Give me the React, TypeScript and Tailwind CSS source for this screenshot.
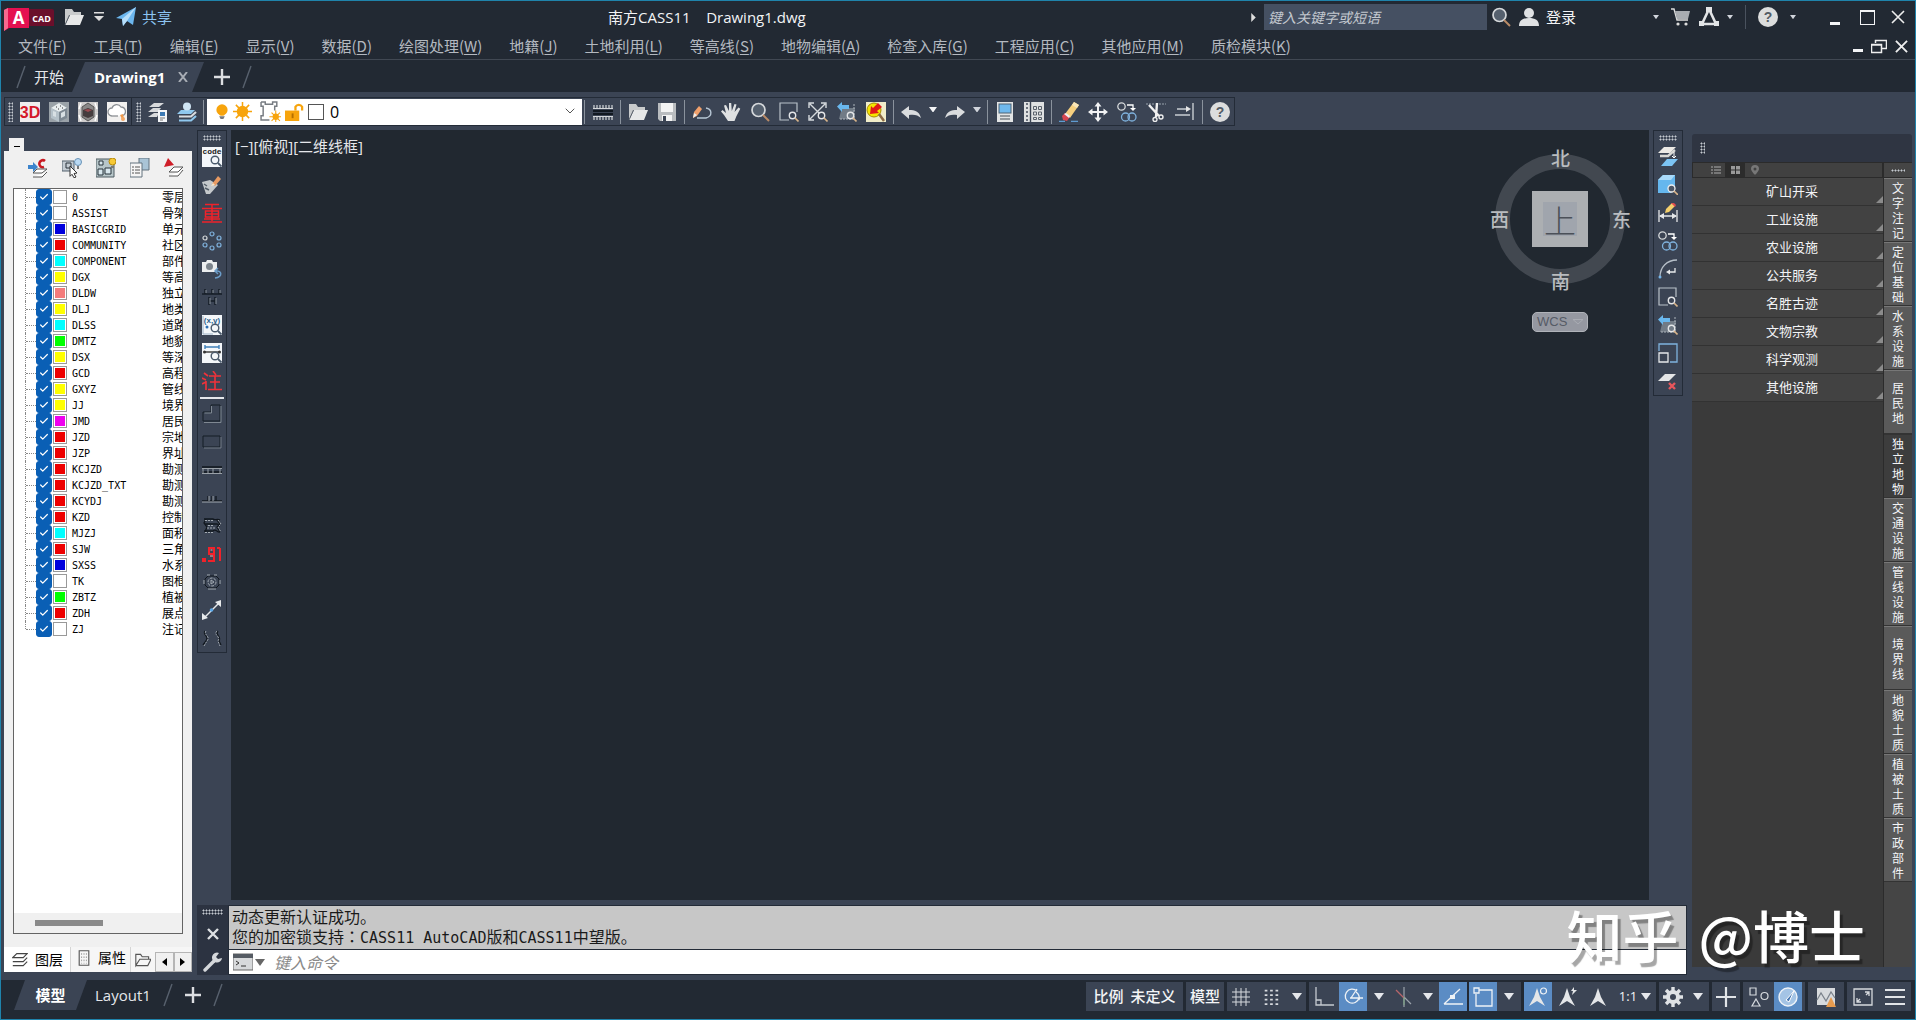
import { useState } from "react";
import type { ReactNode } from "react";
import clsx from "clsx";
import { Check, ChevronDown } from "lucide-react";

interface ToolItem {
  name: string;
  icon: ReactNode;
}

interface Layer {
  name: string;
  note: string;
  color: string;
}

function Icon({ children, className = "size-5" }: { children: ReactNode; className?: string }) {
  return (
    <svg viewBox="0 0 20 20" className={clsx("shrink-0", className)} fill="none" aria-hidden="true">
      {children}
    </svg>
  );
}

function Caret({ className = "w-[10px] text-gray-200" }: { className?: string }) {
  return (
    <svg viewBox="0 0 10 7" className={clsx("shrink-0", className)} aria-hidden="true">
      <path d="M0 0h10L5 7z" fill="currentColor" />
    </svg>
  );
}

// Small magnifier shared by several zoom tools
const lens = (
  <>
    <circle cx="13.5" cy="13.5" r="3.2" stroke="#e4e6e8" strokeWidth="1.4" />
    <path d="M16 16l3.5 3.5" stroke="#d9b48a" strokeWidth="1.6" />
  </>
);

const darkLens = (
  <>
    <circle cx="13" cy="13" r="3.8" fill="#f4f7fa" stroke="#4a5a6c" strokeWidth="1.4" />
    <path d="M16 16l3.5 3.5" stroke="#4a5a6c" strokeWidth="1.8" />
  </>
);

const icons = {
  threeD: (
    <Icon>
      <rect width="20" height="20" fill="#f0eeee" />
      <text x="10" y="16" textAnchor="middle" fontSize="16" fontWeight="700" fill="#d4182a" fontFamily="Liberation Sans">3D</text>
    </Icon>
  ),
  cube: (
    <Icon>
      <rect width="20" height="20" fill="#9aa2a8" />
      <path d="M2 6l8-5 8 5-8 4z" fill="#e9eef0" />
      <path d="M2 6l8 4v10l-8-4z" fill="#b5c1c9" />
      <path d="M18 6l-8 4v10l8-4z" fill="#7d8993" />
      <path d="M4 9l3 1v5l-3-1zM12 11l4-2v5l-4 2z" fill="#d8e0e4" />
      <path d="M7 5h1m3-1h1m-3 3h1m3-1h1" stroke="#333" />
    </Icon>
  ),
  orbit: (
    <Icon>
      <rect width="20" height="20" fill="#cfcdcd" />
      <path d="M4 5l6-4 6 4v10l-6 4-6-4z" fill="#8a8888" stroke="#555" />
      <path d="M5 8l5-2 5 2v6l-5 2-5-2z" fill="#453c3e" />
      <path d="M6 8l4 2 4-2-4-1z" fill="#9b4a50" />
      <path d="M3 1L1 7m16-6l2 6M3 19l-2-6m16 6l2-6" stroke="#fff" strokeWidth="1.4" />
    </Icon>
  ),
  cloud: (
    <Icon>
      <rect width="20" height="20" fill="#f1f0ef" />
      <path d="M5 14a4 4 0 010-8 5 5 0 019-1 4.500 4.500 0 012 8.500" stroke="#8b8f94" strokeWidth="1.3" fill="#fff" />
      <path d="M5 14h6" stroke="#8b8f94" strokeWidth="1.3" />
      <path d="M13 13l2 4 2 0-1-5z" fill="#ef9a4b" />
      <circle cx="16" cy="17" r="2" fill="#f2a765" />
    </Icon>
  ),
  layerProps: (
    <Icon>
      <path d="M6 1h10l-5 4H1zM5 6h8l-3 4H0zM6 11h5l-2 4H0z" fill="#d8dadc" />
      <rect x="10" y="8" width="9" height="12" fill="#f4f6f8" />
      <rect x="12" y="10" width="5" height="4" fill="#3d7ab4" />
      <path d="M12 16h5m-5 2h3" stroke="#777" />
    </Icon>
  ),
  layerCurrent: (
    <Icon>
      <path d="M4 8h14l-4 4H0z" fill="#8fc8ee" />
      <circle cx="10" cy="4.500" r="4" fill="#cfe4f3" />
      <path d="M19 10l-5 4.500H2" stroke="#d9dcdf" strokeWidth="2.200" />
      <path d="M19 14l-5 4.500H2" stroke="#8fc8ee" strokeWidth="2.200" />
    </Icon>
  ),
  hatch: (
    <Icon>
      <path d="M0 9h20M0 12h20" stroke="#111820" strokeWidth="2" />
      <path d="M1 3v3M4 3v3M7 3v3M10 3v3M13 3v3M16 3v3M19 3v3M1 15v3M4 15v3M7 15v3M10 15v3M13 15v3M16 15v3M19 15v3" stroke="#d3d6d9" strokeWidth="1.2" />
      <path d="M0 6.500h20M0 14.500h20" stroke="#d3d6d9" />
    </Icon>
  ),
  folder: (
    <Icon>
      <path d="M1 18V2h7l2 3h7v3H6z" fill="#c9cbcc" />
      <path d="M6 8h14l-4 10H1z" fill="#e7e8e8" />
      <path d="M1 18L5.500 8" stroke="#565e68" />
    </Icon>
  ),
  save: (
    <Icon>
      <path d="M1 1h18v18H3l-2-2z" fill="#b9bcbf" />
      <rect x="4" y="1" width="12" height="9" fill="#f3f3f3" />
      <rect x="5" y="13" width="10" height="6" fill="#f3f3f3" />
      <rect x="6" y="14" width="3" height="5" fill="#3b4453" />
    </Icon>
  ),
  pencil: (
    <Icon>
      <path d="M1 16l1-6 5-6 3 3-5 7z" fill="#f0a06c" />
      <path d="M1 16l1-5 3 2z" fill="#eee" />
      <path d="M5 16h9c7-2 6-9 0-10" stroke="#b7c6d4" strokeWidth="1.400" />
    </Icon>
  ),
  hand: (
    <Icon>
      <path d="M7 19l-4-6-3-3.500 1.500-1.500L5 11 3 3.500 5 3l3 6V1h2.200l.6 8L13.500 2l2 .6L13.500 10l4-4.500 1.800 1.300L15.500 14 13.500 19z" fill="#dfe1e2" />
    </Icon>
  ),
  zoom: (
    <Icon>
      <circle cx="8.500" cy="8" r="6.500" fill="#55606e" stroke="#d5d8db" strokeWidth="1.700" />
      <path d="M13 13l6 6" stroke="#b98b67" strokeWidth="2" />
    </Icon>
  ),
  zoomWindow: (
    <Icon>
      <path d="M10 18H1V1h17v9" stroke="#b9c1c9" strokeWidth="1.200" />
      {lens}
    </Icon>
  ),
  zoomExtents: (
    <Icon>
      <path d="M2 2l9 9M17 2L2 17M1 6V1h5M13 1h5v5M1 13v5h5" stroke="#d5d9dd" strokeWidth="1.400" />
      {lens}
    </Icon>
  ),
  zoomPrev: (
    <Icon>
      <path d="M3 6h15v3H4zM4 9h13l1 8H2z" fill="#717b86" />
      <path d="M17 2v15H3" stroke="#aeb5bc" strokeDasharray="2 1" />
      <path d="M0 4.500L5 0v3h7v4H5v3z" fill="#69b7ed" />
      {lens}
    </Icon>
  ),
  redraw: (
    <Icon>
      <rect width="20" height="20" fill="#f1edc9" />
      <circle cx="8" cy="8" r="7" fill="#f5e400" stroke="#a78c00" />
      <path d="M4 12l1-8 2 2 5-5 4 4-5 4 2 2z" fill="#e11818" />
      <path d="M13 12l5 7" stroke="#8d6b45" strokeWidth="2.500" />
    </Icon>
  ),
  undo: (
    <Icon>
      <path d="M0 10l8-6v4c6 0 10 1 12 8-3-3-7-4-12-3v4z" fill="#dadcde" />
    </Icon>
  ),
  redo: (
    <Icon>
      <path d="M20 10l-8-6v4c-6 0-10 1-12 8 3-3 7-4 12-3v4z" fill="#dadcde" />
    </Icon>
  ),
  properties: (
    <Icon>
      <rect x="2" y="0" width="16" height="20" fill="#e2e4e5" />
      <rect x="4" y="2" width="12" height="9" fill="#6fb9ee" stroke="#4e6275" />
      <path d="M5 14h10M5 17h10" stroke="#7a7f84" strokeWidth="1.400" />
    </Icon>
  ),
  design: (
    <Icon>
      <path d="M0 0h20v20H0z" fill="#dfe1e2" />
      <path d="M6.500 0v20" stroke="#3b4453" strokeWidth="1.400" />
      <path d="M3 1v18" stroke="#3b4453" strokeWidth="1.400" strokeDasharray="2 2" />
      <path d="M9.500 4.500h3v3h-3zm5 0h3v3h-3zm-5 5.500h3v3h-3zm5 0h3v3h-3zm-5 5.500h3v2h-3zm5 0h3v2h-3z" stroke="#5a626c" />
    </Icon>
  ),
  brush: (
    <Icon>
      <path d="M6 12L15 0l5 3-9 13z" fill="#f5cf7e" />
      <path d="M15 0l5 3-2 3-5-3z" fill="#f7e5b9" />
      <path d="M3 14l3-3 5 4-3 4-4-1z" fill="#d84650" />
      <path d="M5 12l2-1 4 3-1 2z" fill="#f1f1f1" />
      <path d="M0 19.300h6m6 0h7" stroke="#5f9bd0" strokeWidth="1.300" />
    </Icon>
  ),
  move: (
    <Icon>
      <path d="M10 3v14M3 10h14" stroke="#f2f3f4" strokeWidth="2" />
      <path d="M10 0l3.500 4.500h-7zM10 20l3.500-4.500h-7zM0 10l4.500-3.500v7zM20 10l-4.500-3.500v7z" fill="#f2f3f4" />
    </Icon>
  ),
  copy: (
    <Icon>
      <circle cx="4.500" cy="4.500" r="3.700" stroke="#d5d8da" strokeWidth="1.300" />
      <path d="M10 3h6v4" stroke="#fff" strokeWidth="1.300" />
      <path d="M13 6h6l-3 3z" fill="#fff" />
      <circle cx="8.500" cy="15" r="4" stroke="#7fb1dc" strokeWidth="1.300" />
      <circle cx="15" cy="15" r="4" stroke="#7fb1dc" strokeWidth="1.300" />
    </Icon>
  ),
  trim: (
    <Icon>
      <path d="M0 2h8m5 0h7" stroke="#9aa3ad" strokeDasharray="2 1" />
      <path d="M3 3l10 11M11 1l-1 14" stroke="#f1f1f1" strokeWidth="2.400" />
      <circle cx="9" cy="17.500" r="2" stroke="#eee" strokeWidth="1.400" />
      <circle cx="15" cy="15" r="2" stroke="#eee" strokeWidth="1.400" />
    </Icon>
  ),
  extend: (
    <Icon>
      <path d="M2 7h9M0 13h15" stroke="#c9cdd2" strokeWidth="1.400" />
      <path d="M11 4l5 3-5 3z" fill="#e6e6e6" />
      <path d="M18 1v17" stroke="#c9cdd2" strokeWidth="1.400" />
    </Icon>
  ),
  help: (
    <Icon>
      <circle cx="10" cy="10" r="10" fill="#dcdddd" />
      <text x="10" y="15" textAnchor="middle" fontSize="14" fontWeight="700" fill="#535b65" fontFamily="Liberation Sans">?</text>
    </Icon>
  ),
  gear: (
    <Icon>
      <circle cx="10" cy="10" r="5" stroke="#dfe2e5" strokeWidth="4" />
      <path d="M10 0v4M10 16v4M0 10h4M16 10h4M3 3l3 3M14 14l3 3M17 3l-3 3M6 14l-3 3" stroke="#dfe2e5" strokeWidth="3.400" />
    </Icon>
  ),
};

const leftIcons: ToolItem[] = [
  {
    name: "编码查询",
    icon: (
      <Icon>
        <rect width="20" height="20" fill="#f4f7fa" />
        <text x="10" y="7" textAnchor="middle" fontSize="8" fontWeight="700" fill="#222" fontFamily="Liberation Mono">code</text>
        {darkLens}
      </Icon>
    ),
  },
  {
    name: "标签",
    icon: (
      <Icon>
        <path d="M0 7l8-2 8 5-8 9H4z" fill="#c5c9cc" />
        <path d="M2 9l3 2m-2 2l4 2" stroke="#555f69" strokeWidth="1.500" />
        <path d="M10 9l6-8 3 3-6 7z" fill="#e89a62" />
        <path d="M9 11l2-3 2 2z" fill="#f5e4c8" />
      </Icon>
    ),
  },
  {
    name: "重构",
    icon: (
      <Icon>
        <path d="M3 1.500h14M0 5.500h20M3.500 8h13v6h-13zM3.500 11h13M10 1v17M2 16h16M0 19h20" stroke="#f0222a" strokeWidth="1.500" />
      </Icon>
    ),
  },
  {
    name: "阵列",
    icon: (
      <Icon>
        <g stroke="#7fb1dc" strokeWidth="1.200">
          <circle cx="3" cy="7" r="2" stroke="#d5d8da" />
          <circle cx="10" cy="3" r="2" />
          <circle cx="17" cy="7" r="2" />
          <circle cx="3" cy="14" r="2" />
          <circle cx="10" cy="17" r="2" />
          <circle cx="17" cy="14" r="2" />
        </g>
      </Icon>
    ),
  },
  {
    name: "照片",
    icon: (
      <Icon>
        <path d="M0 3h4l1-2h5l1 2h4v10H0z" fill="#eceeef" />
        <circle cx="7.500" cy="7.500" r="3.500" fill="#7c848c" />
        <path d="M13 19c8-1 7-8 1-7m2-3l-3 3 3 3" stroke="#6b9cc8" strokeWidth="1.500" />
      </Icon>
    ),
  },
  {
    name: "坡坎",
    icon: (
      <Icon>
        <path d="M0 7h20M3 2v5M10 2v5M17 2v5M7 10v8M13 10v8M7 14h6" stroke="#161d26" strokeWidth="1.500" />
        <path d="M4 3v3M11 3v3M18 3v3M8 11v6M14 11v6" stroke="#89919a" />
      </Icon>
    ),
  },
  {
    name: "坐标查询",
    icon: (
      <Icon>
        <rect width="20" height="20" fill="#f4f7fa" />
        <text x="10" y="8" textAnchor="middle" fontSize="8" fontWeight="700" fill="#2b5f8d" fontFamily="Liberation Sans">(x,y)</text>
        <circle cx="5" cy="12" r="1.500" fill="#2b6db3" />
        <path d="M1 1v18h10" stroke="#9cb0c4" />
        {darkLens}
      </Icon>
    ),
  },
  {
    name: "距离查询",
    icon: (
      <Icon>
        <rect width="20" height="20" fill="#f4f7fa" />
        <path d="M3 4h14M3 2v4M17 2v4" stroke="#3e7fb8" strokeWidth="1.400" />
        <path d="M3 9h14" stroke="#333" strokeWidth="1.400" />
        <circle cx="2.500" cy="9" r="1.500" fill="#333" />
        <circle cx="17.500" cy="9" r="1.500" fill="#333" />
        {darkLens}
      </Icon>
    ),
  },
  {
    name: "注记",
    icon: (
      <Icon>
        <path d="M2 2l4 3M0 7l4 2M4 10v9M0 13l4-2M11 0l3 4M7 5h12M8 11h10M6 18.500h14M13 5v13" stroke="#f0323a" strokeWidth="1.600" />
      </Icon>
    ),
  },
];

const drawIcons: ToolItem[] = [
  {
    name: "多点房屋",
    icon: (
      <Icon>
        <path d="M1 17V8h8V1h9v16z" stroke="#151c25" />
        <path d="M2 18.500h17V2M2.500 9h7V2" stroke="#7f8892" />
      </Icon>
    ),
  },
  {
    name: "四点房屋",
    icon: (
      <Icon>
        <path d="M1 4h17v11H1z" stroke="#151c25" />
        <path d="M2 16h17V5" stroke="#727b86" />
      </Icon>
    ),
  },
  {
    name: "围墙",
    icon: (
      <Icon>
        <path d="M0 7h20M0 12h20" stroke="#10161d" strokeWidth="1.500" />
        <path d="M0 8.500h20M0 13.500h20M1 8v5m5-5v5m5-5v5m7-5v5" stroke="#9aa1a8" />
      </Icon>
    ),
  },
  {
    name: "陡坎",
    icon: (
      <Icon>
        <path d="M0 13h20M6 8v5m4-5v5m4-5v5" stroke="#10161d" strokeWidth="1.300" />
        <path d="M0 14h20M7 8v5m4-5v5" stroke="#a4abb3" />
      </Icon>
    ),
  },
  {
    name: "等高线",
    icon: (
      <Icon>
        <path d="M2 3h9c2 2 4-1 7 1M3 8h12l3 2M2 15h9c3-3 4 2 7 1M4 3l-2 4 3 4-2 5M15 4l3 4-3 3 3 5" stroke="#11171e" strokeWidth="1.300" />
        <path d="M3 4.500h8m0 5H6M3 16.500h8M5 12h8M16 4l3 4-3 3 3 5" stroke="#a4abb3" strokeDasharray="2 1" />
      </Icon>
    ),
  },
  {
    name: "高程点",
    icon: (
      <Icon>
        <path d="M1 15h2v2H1zM12 4H7v6h5zM12 9v8H6M18 4v13m-3-13h3" stroke="#f0222a" strokeWidth="2" />
        <path d="M8 12h3M8.500 6h2" stroke="#f9a5a8" />
      </Icon>
    ),
  },
  {
    name: "控制点",
    icon: (
      <Icon>
        <path d="M6 4h8l3 3v6l-3 3H6l-3-3V7z" stroke="#11171e" />
        <path d="M5 3h3m4 0h3M2 8v4M18 8v4M6 17h8" stroke="#a4abb3" />
        <circle cx="10" cy="10" r="4" stroke="#a4abb3" strokeDasharray="3 1" />
        <path d="M9 8l3 2-3 2z" stroke="#a4abb3" />
      </Icon>
    ),
  },
  {
    name: "连线",
    icon: (
      <Icon>
        <path d="M3 17L17 3" stroke="#e8eaec" strokeWidth="1.500" />
        <path d="M19 0v7l-6-5zM0 20v-7l6 5z" fill="#e8eaec" />
        <circle cx="9.500" cy="10" r="1.800" fill="#5ea9e8" />
      </Icon>
    ),
  },
  {
    name: "符号反向",
    icon: (
      <Icon>
        <path d="M3 3c-3 4 5 5 1 10l-3 4M16 3c-4 4 4 5 1 10l2 4" stroke="#11171e" strokeWidth="1.300" />
        <path d="M4 3c-3 4 5 5 1 10l-3 5m13-15c-4 4 4 5 1 10l2 5" stroke="#a4abb3" strokeDasharray="2 1" />
      </Icon>
    ),
  },
];

const rightIcons: ToolItem[] = [
  {
    name: "图层匹配",
    icon: (
      <Icon>
        <path d="M6 0h12l-6 6H0z" fill="#eceae6" />
        <path d="M2 9h8l7-6" stroke="#d8d8d5" strokeWidth="2.400" />
        <path d="M16 5v6m-2-2l2 2 2-2" stroke="#fff" />
        <path d="M9 12h11l-6 7H3z" fill="#7cc4f4" />
      </Icon>
    ),
  },
  {
    name: "三维视图",
    icon: (
      <Icon>
        <path d="M0 5l5-5h12v13l-4 5H0z" fill="#65b7ee" />
        <path d="M0 5l5-5h12l-4 5z" fill="#a9dafa" />
        <circle cx="13.500" cy="13.500" r="3.500" fill="#4c5665" stroke="#eee" strokeWidth="1.300" />
        <path d="M16 16l4 4" stroke="#d9b48a" strokeWidth="1.600" />
      </Icon>
    ),
  },
  {
    name: "标注",
    icon: (
      <Icon>
        <path d="M1 7v12M19 7v12M2 13h16" stroke="#e5e7e9" strokeWidth="1.300" />
        <path d="M1 13l5-3v6zM19 13l-5-3v6z" fill="#e5e7e9" />
        <path d="M7 10l1-4 6-6 3 3-6 6z" fill="#f4cf6c" />
        <path d="M13 0l2-1 3 3-1 2z" fill="#df4c50" />
      </Icon>
    ),
  },
  { name: "复制", icon: icons.copy },
  {
    name: "圆弧",
    icon: (
      <Icon>
        <path d="M2 18C2 8 9 1 19 1" stroke="#b6bfc8" strokeWidth="1.300" />
        <path d="M17 9v4h-6" stroke="#e8eaec" strokeWidth="1.300" />
        <path d="M12 10.500v5L8 13z" fill="#e8eaec" />
        <circle cx="2" cy="18" r="1.500" fill="#74b4e8" />
      </Icon>
    ),
  },
  { name: "窗口缩放", icon: icons.zoomWindow },
  { name: "上一视图", icon: icons.zoomPrev },
  {
    name: "缩放对象",
    icon: (
      <Icon>
        <path d="M1 8V1h18v18h-7" stroke="#7fb3de" strokeWidth="1.300" />
        <path d="M1 10h9v9H1z" stroke="#e6e8ea" strokeWidth="1.300" />
      </Icon>
    ),
  },
  {
    name: "删除图层",
    icon: (
      <Icon>
        <path d="M7 3h11l-7 7H0z" fill="#e3e5e6" />
        <path d="M11 12l6 6m0-6l-6 6" stroke="#e7565c" strokeWidth="2.400" />
      </Icon>
    ),
  },
];

const panelIcons: ToolItem[] = [
  {
    name: "置为当前",
    icon: (
      <Icon>
        <path d="M0 7h5V4l5 5-5 5v-3H0z" fill="#3c84cc" />
        <path d="M17 3a3.500 3.500 0 10-1 6" stroke="#c71820" strokeWidth="2.600" />
        <path d="M9 11h10l-5 4H5zM19 14l-5 5H5" fill="#fff" stroke="#555" />
      </Icon>
    ),
  },
  {
    name: "选择",
    icon: (
      <Icon>
        <path d="M0 3h12v10H0z" fill="#c4ccd3" stroke="#52606c" />
        <path d="M4 5h5v5H4z" stroke="#29323b" />
        <circle cx="16" cy="4" r="3.500" fill="#b9d9f3" stroke="#6791b5" />
        <path d="M15 8h2v3h-2z" fill="#777" />
        <path d="M8 8l7 7-3 .5 2 3.500-2 .8-2-3.500-2 2z" fill="#fff" stroke="#333" />
      </Icon>
    ),
  },
  {
    name: "显示图层",
    icon: (
      <Icon>
        <path d="M0 1h18v18H0z" fill="#b7c6c9" stroke="#4c5a60" />
        <path d="M3 3h4v4H3zM9 10h6v6H9zM2 11h5v6H2z" fill="#d8e7ed" stroke="#26323a" />
        <circle cx="16.500" cy="3.500" r="3.500" fill="#f7c935" stroke="#b68a10" />
        <path d="M15 8h3v2h-3z" fill="#777" />
      </Icon>
    ),
  },
  {
    name: "图层列表",
    icon: (
      <Icon>
        <path d="M9 0h10v12H9z" fill="#a9c4d6" stroke="#63727e" />
        <path d="M0 5h12v14H0z" fill="#f5f5f5" stroke="#63727e" />
        <path d="M2 9h2m1 0h5M2 12h2m1 0h5M2 15h2m1 0h5" stroke="#555" />
      </Icon>
    ),
  },
  {
    name: "清理图层",
    icon: (
      <Icon>
        <path d="M0 9l4-9 6 7z" fill="#cf1e28" />
        <path d="M10 9h9l-5 5H5zM19 12l-5 6H5" fill="#fff" stroke="#555" />
      </Icon>
    ),
  },
];

const menus = [
  ["文件", "F"],
  ["工具", "T"],
  ["编辑", "E"],
  ["显示", "V"],
  ["数据", "D"],
  ["绘图处理", "W"],
  ["地籍", "J"],
  ["土地利用", "L"],
  ["等高线", "S"],
  ["地物编辑", "A"],
  ["检查入库", "G"],
  ["工程应用", "C"],
  ["其他应用", "M"],
  ["质检模块", "K"],
];

const RED = "#ee0000";
const YELLOW = "#ffff00";
const CYAN = "#00ffff";
const WHITE = "#ffffff";

const layers: Layer[] = [
  { name: "0", note: "零层", color: WHITE },
  { name: "ASSIST", note: "骨架", color: WHITE },
  { name: "BASICGRID", note: "单元", color: "#0000dd" },
  { name: "COMMUNITY", note: "社区", color: RED },
  { name: "COMPONENT", note: "部件", color: CYAN },
  { name: "DGX", note: "等高", color: YELLOW },
  { name: "DLDW", note: "独立", color: "#f47c7c" },
  { name: "DLJ", note: "地类", color: YELLOW },
  { name: "DLSS", note: "道路", color: CYAN },
  { name: "DMTZ", note: "地貌", color: "#00ff00" },
  { name: "DSX", note: "等深", color: YELLOW },
  { name: "GCD", note: "高程", color: RED },
  { name: "GXYZ", note: "管线", color: YELLOW },
  { name: "JJ", note: "境界", color: YELLOW },
  { name: "JMD", note: "居民", color: "#ee00ee" },
  { name: "JZD", note: "宗地", color: RED },
  { name: "JZP", note: "界址", color: RED },
  { name: "KCJZD", note: "勘测", color: RED },
  { name: "KCJZD_TXT", note: "勘测", color: RED },
  { name: "KCYDJ", note: "勘测", color: RED },
  { name: "KZD", note: "控制", color: RED },
  { name: "MJZJ", note: "面积", color: CYAN },
  { name: "SJW", note: "三角", color: RED },
  { name: "SXSS", note: "水系", color: "#0000dd" },
  { name: "TK", note: "图框", color: WHITE },
  { name: "ZBTZ", note: "植被", color: "#00ff00" },
  { name: "ZDH", note: "展点", color: RED },
  { name: "ZJ", note: "注记", color: WHITE },
];

const categories = ["矿山开采", "工业设施", "农业设施", "公共服务", "名胜古迹", "文物宗教", "科学观测", "其他设施"];

const sideTabs = [
  "文字注记",
  "定位基础",
  "水系设施",
  "居民地",
  "独立地物",
  "交通设施",
  "管线设施",
  "境界线",
  "地貌土质",
  "植被土质",
  "市政部件",
];

function TitleBar() {
  return (
    <header className="flex h-8 shrink-0 items-center pl-[3px]">
      <div className="flex w-[604px] items-center">
        <svg viewBox="0 0 50 24" className="mt-1 h-6 w-[50px]" aria-label="AutoCAD">
          <path d="M18 2h30q2 0 2 2v15H18z" fill="#6b0f2b" />
          <path d="M0 3l4-2h21v20H5l-5 3z" fill="#e51050" />
          <path d="M0 3l4-2v20l-4 3z" fill="#f6698f" />
          <text x="14.500" y="17" textAnchor="middle" fontSize="17" fontWeight="700" fill="#fff" fontFamily="Open Sans">A</text>
          <text x="37.500" y="15" textAnchor="middle" fontSize="9" fontWeight="700" fill="#fff" fontFamily="Open Sans">CAD</text>
        </svg>
        <button type="button" aria-label="打开" className="ml-[10px]">{icons.folder}</button>
        <button type="button" aria-label="自定义" className="ml-[10px]">
          <svg viewBox="0 0 10 10" className="size-[10px]">
            <path d="M0 0h10v1.500H0zM0 4h10L5 9z" fill="#ddd" />
          </svg>
        </button>
        <button type="button" className="ml-3 flex items-center gap-1.5 text-[15px] text-[#8cc4f2]">
          <Icon>
            <path d="M0 11L20 0l-3 18-6-4-4 5-1-7z" fill="#6cb6ee" />
            <path d="M6 12L20 0l-9 14-4 5z" fill="#b7defa" />
          </Icon>
          共享
        </button>
      </div>
      <h1 className="font-['Open_Sans','Noto_Sans_CJK_SC',sans-serif] text-[15px] whitespace-pre text-gray-100">南方CASS11{"    "}Drawing1.dwg</h1>
      <div className="ml-auto flex items-center pr-[10px]">
        <svg viewBox="0 0 5 10" className="mr-2 h-[9px] w-[5px]"><path d="M0 0l5 5-5 5z" fill="#ddd" /></svg>
        <input
          aria-label="搜索"
          placeholder="键入关键字或短语"
          className="h-[26px] w-[223px] bg-[#455062] px-1 text-[14px] italic outline-none placeholder:text-[#c3c8cf]"
        />
        <button type="button" aria-label="查找" className="ml-1">{icons.zoom}</button>
        <button type="button" className="ml-2 flex w-[117px] items-center gap-[7px] text-[15px] text-gray-100">
          <Icon>
            <circle cx="10" cy="6" r="5" fill="#dfe1e3" />
            <path d="M0 19c0-6 4-8 10-8s10 2 10 8z" fill="#dfe1e3" />
          </Icon>
          登录
        </button>
        <button type="button" aria-label="账户选项" className="ml-[17px]"><Caret className="w-[6px] text-gray-300" /></button>
        <button type="button" aria-label="购物车" className="ml-3">
          <Icon>
            <path d="M0 2h3l3 11h11" stroke="#ddd" strokeWidth="1.400" />
            <path d="M4 4h15l-2 8H6z" fill="#a8acb1" />
            <circle cx="7" cy="17" r="1.600" fill="#ddd" />
            <circle cx="15" cy="17" r="1.600" fill="#ddd" />
          </Icon>
        </button>
        <button type="button" aria-label="Autodesk" className="ml-2 flex items-center gap-2">
          <Icon>
            <path d="M10 2L3 17h14z" stroke="#e2e4e6" strokeWidth="2.600" strokeLinejoin="round" />
            <path d="M7 0h6v5H7zM0 14h5v5H0zM15 14h5v5h-5z" fill="#e2e4e6" />
          </Icon>
          <Caret className="w-[6px] text-gray-300" />
        </button>
        <span className="mx-3 h-6 w-px bg-[#4a525e]" />
        <button type="button" aria-label="帮助" className="flex items-center gap-3">
          {icons.help}
          <Caret className="w-[6px] text-gray-300" />
        </button>
        <button type="button" aria-label="最小化" className="ml-[34px] h-4 w-[10px] border-b-3 border-gray-100" />
        <button type="button" aria-label="最大化" className="ml-5 size-[15px] border border-t-2 border-gray-100" />
        <button type="button" aria-label="关闭" className="ml-4">
          <svg viewBox="0 0 14 14" className="size-[14px]"><path d="M1 1l12 12M13 1L1 13" stroke="#eee" strokeWidth="1.600" /></svg>
        </button>
      </div>
    </header>
  );
}

function MenuBar() {
  return (
    <nav className="flex h-[27px] shrink-0 items-center border-b border-[#414853] pr-[7px] pl-[17px] text-[15px] text-[#b4b9c0]">
      <div className="flex gap-[27px] pt-px">
        {menus.map(([label, key]) => (
          <button key={label} type="button" className="whitespace-nowrap">
            {label}(<span className="underline underline-offset-2">{key}</span>)
          </button>
        ))}
      </div>
      <div className="ml-auto flex items-center">
        <button type="button" aria-label="最小化图形" className="h-3 w-[10px] border-b-3 border-gray-100" />
        <button type="button" aria-label="还原图形" className="ml-2">
          <svg viewBox="0 0 16 15" className="h-[15px] w-4" fill="none" stroke="#eee">
            <path d="M4.500 4V1.500h11v8H11M4 1.500h12" strokeWidth="1.500" />
            <path d="M.5 5.500h10v8H.5zM0 6h11" strokeWidth="1.500" />
          </svg>
        </button>
        <button type="button" aria-label="关闭图形" className="ml-2">
          <svg viewBox="0 0 14 14" className="size-[13px]"><path d="M1 1l12 12M13 1L1 13" stroke="#eee" strokeWidth="2" /></svg>
        </button>
      </div>
    </nav>
  );
}

function Slash() {
  return (
    <svg viewBox="0 0 10 24" className="h-6 w-[10px] shrink-0" aria-hidden="true">
      <path d="M9 1L1 23" stroke="#58616e" strokeWidth="1.400" />
    </svg>
  );
}

function Plus() {
  return (
    <svg viewBox="0 0 16 16" className="size-4" aria-hidden="true">
      <path d="M8 0v16M0 8h16" stroke="#dcdee1" strokeWidth="2.400" />
    </svg>
  );
}

function FileTabs() {
  return (
    <div className="flex h-8 shrink-0 items-end pl-[15px]">
      <div className="flex h-[30px] items-center">
        <Slash />
        <button type="button" className="ml-2 text-[15px] text-gray-200">开始</button>
        <div className="ml-2 flex h-full w-[132px] items-center bg-[#3b4454] pl-[22px] [clip-path:polygon(13px_0,100%_0,calc(100%-12px)_100%,0_100%)]">
          <button type="button" className="w-[84px] text-left font-['Open_Sans',sans-serif] text-[15px] font-bold text-white">Drawing1</button>
          <button type="button" aria-label="关闭 Drawing1">
            <svg viewBox="0 0 10 10" className="size-[10px]"><path d="M1 0l8 10M9 0L1 10" stroke="#a8adb5" strokeWidth="2" /></svg>
          </button>
        </div>
        <button type="button" aria-label="新建图形" className="mr-3 ml-[10px]"><Plus /></button>
        <Slash />
      </div>
    </div>
  );
}

function ToolButton({ label, children }: { label: string; children: ReactNode }) {
  return (
    <button type="button" aria-label={label} title={label} className="flex h-7 w-[29px] shrink-0 items-center justify-center">
      {children}
    </button>
  );
}

function Divider() {
  return <span className="mr-[2px] ml-[3px] h-6 w-px shrink-0 bg-[#8a929d]" />;
}

function Grip({ className = "h-5 w-[5px]" }: { className?: string }) {
  return (
    <span
      className={clsx("shrink-0 bg-[radial-gradient(#c5cad0_40%,transparent_55%)] bg-size-[3px_3px]", className)}
    />
  );
}

function TopToolbar() {
  return (
    <div className="flex shrink-0 bg-[#3b4454] pt-[5px] pl-[3px]">
      <div className="flex h-[29px] items-center border border-[#232b37] pl-[3px]">
        <Grip />
        <span className="w-[2px]" />
        <ToolButton label="三维">{icons.threeD}</ToolButton>
        <ToolButton label="模型">{icons.cube}</ToolButton>
        <ToolButton label="动态观察">{icons.orbit}</ToolButton>
        <ToolButton label="云">{icons.cloud}</ToolButton>
        <span className="mr-1 h-full w-px bg-[#232b37]" />
        <Grip />
        <span className="w-[2px]" />
        <ToolButton label="图层特性">{icons.layerProps}</ToolButton>
        <ToolButton label="当前图层">{icons.layerCurrent}</ToolButton>
        <span className="mr-[3px] ml-[2px] h-6 w-px bg-[#8a929d]" />
        <div className="flex h-[26px] w-[375px] items-center bg-white pl-2">
          <Icon className="h-5 w-[14px]">
            <circle cx="10" cy="7" r="8" fill="#f7a40c" />
            <path d="M6 12h8l-1 3H7z" fill="#f7a40c" />
            <path d="M6 16h8l-2 4H8z" fill="#76797d" />
          </Icon>
          <Icon className="ml-1 size-[19px]">
            <circle cx="10" cy="10" r="6" fill="#f7a40c" />
            <path d="M10 0v20M0 10h20M3 3l14 14M17 3L3 17" stroke="#f7a40c" strokeWidth="1.600" />
          </Icon>
          <Icon className="ml-2 size-[21px]">
            <path d="M1 1h4v2h7V1h4v4h-2v4M1 1v4h2v9H1v4h8" stroke="#777c82" strokeWidth="1.400" />
            <circle cx="15" cy="15" r="3" fill="#f7a40c" />
            <path d="M15 9v11M9 15h11M11 11l8 8M19 11l-8 8" stroke="#f7a40c" />
          </Icon>
          <Icon className="ml-1 size-[19px]">
            <path d="M11 9V5a4 4 0 017 0v4" stroke="#f7a40c" strokeWidth="2.400" />
            <path d="M0 9h15v11H0z" fill="#f7a40c" />
            <path d="M7 12h2v5H7z" fill="#b46f00" />
          </Icon>
          <span className="ml-1 size-4 border border-[#555]" />
          <div className="relative ml-1 flex-1">
            <select aria-label="图层" className="w-full appearance-none bg-transparent pl-[2px] font-['Open_Sans',sans-serif] text-base leading-6 text-black outline-none">
              <option>0</option>
            </select>
            <ChevronDown className="pointer-events-none absolute top-1 right-1 size-4 text-[#555]" strokeWidth={1.5} />
          </div>
        </div>
        <span className="mr-[3px] ml-[2px] h-6 w-px bg-[#8a929d]" />
        <ToolButton label="线型">{icons.hatch}</ToolButton>
        <Divider />
        <ToolButton label="打开">{icons.folder}</ToolButton>
        <ToolButton label="保存">{icons.save}</ToolButton>
        <Divider />
        <ToolButton label="编辑">{icons.pencil}</ToolButton>
        <ToolButton label="平移">{icons.hand}</ToolButton>
        <ToolButton label="缩放">{icons.zoom}</ToolButton>
        <ToolButton label="窗口缩放">{icons.zoomWindow}</ToolButton>
        <ToolButton label="范围缩放">{icons.zoomExtents}</ToolButton>
        <ToolButton label="上一视图">{icons.zoomPrev}</ToolButton>
        <ToolButton label="重画">{icons.redraw}</ToolButton>
        <Divider />
        <ToolButton label="放弃">{icons.undo}</ToolButton>
        <button type="button" aria-label="放弃列表" className="mb-1 flex w-[15px] justify-center"><Caret className="w-2 text-gray-100" /></button>
        <ToolButton label="重做">{icons.redo}</ToolButton>
        <button type="button" aria-label="重做列表" className="mb-1 flex w-[15px] justify-center"><Caret className="w-2 text-gray-300" /></button>
        <Divider />
        <ToolButton label="特性">{icons.properties}</ToolButton>
        <ToolButton label="设计中心">{icons.design}</ToolButton>
        <Divider />
        <ToolButton label="删除">{icons.brush}</ToolButton>
        <ToolButton label="移动">{icons.move}</ToolButton>
        <ToolButton label="复制">{icons.copy}</ToolButton>
        <ToolButton label="修剪">{icons.trim}</ToolButton>
        <ToolButton label="延伸">{icons.extend}</ToolButton>
        <Divider />
        <ToolButton label="帮助">{icons.help}</ToolButton>
      </div>
    </div>
  );
}

function LayerRow({ layer, last }: { layer: Layer; last: boolean }) {
  const [visible, setVisible] = useState(true);

  return (
    <label className="flex h-4 items-center overflow-hidden whitespace-nowrap">
      <span className={clsx("ml-[11px] w-px self-start border-l border-dotted border-[#888]", last ? "h-2" : "h-4")} />
      <span className="w-[10px] shrink-0 border-t border-dotted border-[#888]" />
      <span className="relative flex size-4 shrink-0">
        <input
          type="checkbox"
          checked={visible}
          onChange={(e) => setVisible(e.target.checked)}
          className="size-4 appearance-none rounded-[3px] border border-[#0a5fb5] bg-white checked:bg-[#0a5fb5]"
        />
        {visible && <Check className="pointer-events-none absolute top-[3px] left-[3px] size-[10px] text-white" strokeWidth={3} />}
      </span>
      <span className="ml-px size-[14px] shrink-0 border border-[#999] bg-white p-px">
        <span className="block size-full" style={{ backgroundColor: layer.color }} />
      </span>
      <span className="ml-[5px] w-[90px] shrink-0 font-['DejaVu_Sans_Mono','Liberation_Mono',monospace] text-[10px]">{layer.name}</span>
      <span className="text-[12px] leading-4">{layer.note}</span>
    </label>
  );
}

function LayerPanel() {
  return (
    <aside className="flex w-[188px] shrink-0 flex-col pt-3 pb-2 text-black">
      <button type="button" aria-label="收起" className="ml-[5px] flex h-[13px] w-[15px] items-center justify-center bg-[#f0f0f0]">
        <span className="mt-1 h-px w-[6px] bg-black" />
      </button>
      <div className="flex min-h-0 flex-1 flex-col bg-[#f0f0f0]">
        <div className="flex h-[37px] shrink-0 items-center gap-[14px] overflow-hidden pb-1 pl-6">
          {panelIcons.map(({ name, icon }) => (
            <button key={name} type="button" aria-label={name} title={name}>
              {icon}
            </button>
          ))}
        </div>
        <div className="mr-[9px] ml-[9px] flex min-h-0 flex-1 flex-col border border-[#646464] bg-white">
          <div className="min-h-0 flex-1 overflow-hidden">
            {layers.map((layer, i) => (
              <LayerRow key={layer.name} layer={layer} last={i === layers.length - 1} />
            ))}
          </div>
          <div className="flex h-5 shrink-0 items-center bg-[#f0f0f0] pl-[21px]">
            <span className="h-[6px] w-[68px] bg-[#8a8a8a]" />
          </div>
        </div>
        <div className="mt-[13px] flex h-[25px] shrink-0 items-center bg-[#f6f6f6] text-[14px]">
          <button type="button" className="flex h-full w-[67px] items-center gap-[7px] border-r border-[#d5d5d5] bg-white pl-2 whitespace-nowrap">
            <Icon className="size-4">
              <path d="M6 2h13l-5 5H1zM1 12h13l5-5M1 17h13l5-5" stroke="#444" strokeWidth="1.400" />
            </Icon>
            图层
          </button>
          <button type="button" className="flex h-full w-[60px] items-center gap-[6px] border-r border-[#d5d5d5] pb-1 pl-[5px] whitespace-nowrap">
            <Icon className="size-4">
              <path d="M4 1h12v18H4z" stroke="#555" strokeWidth="1.400" />
              <path d="M7 4v13m3-13v13m3-13v13" stroke="#888" strokeDasharray="2 2" />
            </Icon>
            属性
          </button>
          <button type="button" aria-label="文件" className="flex w-6 justify-end overflow-hidden pr-1">
            <Icon className="size-4">
              <path d="M1 17V3h6l2 3h8v3H6zM6 9h14l-4 8H1" stroke="#555" strokeWidth="1.400" />
            </Icon>
          </button>
          {["M5 0v8L0 4z", "M0 0v8l5-4z"].map((d, i) => (
            <button key={d} type="button" aria-label={i ? "下一个" : "上一个"} className="mt-1 flex h-5 flex-1 items-center justify-center border border-[#b5b5b5] bg-[#f0f0f0]">
              <svg viewBox="0 0 5 8" className="h-2 w-[5px]"><path d={d} /></svg>
            </button>
          ))}
        </div>
      </div>
    </aside>
  );
}

function VerticalToolbar({ groups }: { groups: ToolItem[][] }) {
  return (
    <div className="flex w-[30px] flex-col items-center self-start border border-[#232b37]">
      <Grip className="mt-1 mb-[2px] h-[6px] w-[18px]" />
      {groups.map((group, i) => (
        <div key={i} className={clsx("flex flex-col items-center", i > 0 && "mt-[2px] w-6 border-t-2 border-gray-200 pt-px")}>
          {group.map(({ name, icon }) => (
            <button key={name} type="button" aria-label={name} title={name} className="flex size-7 items-center justify-center">
              {icon}
            </button>
          ))}
        </div>
      ))}
    </div>
  );
}

function ViewCube() {
  return (
    <div className="flex w-[160px] flex-col items-center gap-[18px]">
      <div className="relative flex size-[150px] items-center justify-center font-['Noto_Sans_CJK_SC',sans-serif] text-[19px] leading-5 font-medium text-[#b9bcbf]">
        <div className="size-[130px] rounded-full border-[15px] border-[#424850]" />
        <span className="absolute top-[4px] left-[66px]">北</span>
        <span className="absolute bottom-[3px] left-[66px]">南</span>
        <span className="absolute top-[65px] left-[5px]">西</span>
        <span className="absolute top-[65px] right-[4px]">东</span>
        <button type="button" className="absolute flex size-[56px] items-center justify-center bg-[#acafb2]">
          <span className="flex size-[34px] items-center justify-center bg-[#a0a5ad] text-[32px] leading-8 font-light text-[#4b5058]">上</span>
        </button>
      </div>
      <button type="button" className="flex h-5 w-[56px] items-center justify-between rounded-[5px] border border-[#b0b3b9] bg-[#9598a1] px-1 font-['Liberation_Sans',sans-serif] text-[13px] text-[#555b66]">
        WCS
        <svg viewBox="0 0 10 6" className="w-[10px]" fill="none"><path d="M0 .5h10L5 5z" stroke="#a9acb3" /></svg>
      </button>
    </div>
  );
}

function CommandLine() {
  return (
    <section className="mt-[5px] mb-[5px] flex h-[70px] shrink-0">
      <div className="flex w-[31px] shrink-0 flex-col items-center justify-between bg-[#2c3341] py-[3px]">
        <Grip className="mt-px h-[6px] w-[21px]" />
        <button type="button" aria-label="关闭命令行">
          <svg viewBox="0 0 12 12" className="size-3"><path d="M1 1l10 10M11 1L1 11" stroke="#dde0e3" strokeWidth="2.400" /></svg>
        </button>
        <button type="button" aria-label="自定义命令行">
          <Icon>
            <path d="M2 18l9-9" stroke="#d5d8db" strokeWidth="3.400" strokeLinecap="round" />
            <path d="M16 1a5 5 0 103 5l-4 1-2-2z" fill="#d5d8db" />
          </Icon>
        </button>
      </div>
      <div className="flex min-w-0 flex-1 flex-col border border-[#232b37] bg-white">
        <div className="h-[44px] border-b border-[#232b37] bg-[#c7c7c7] pt-[2px] pl-[3px] font-['DejaVu_Sans_Mono','Noto_Sans_CJK_SC',monospace] text-[15px] leading-5 text-[#1a1a1a]">
          <p className="text-[16px]">动态更新认证成功。</p>
          <p className="whitespace-pre">
            <span className="text-[16px]">您的加密锁支持</span>
            <span className="font-['Noto_Sans_CJK_JP',sans-serif] text-[16px] leading-4">：</span>CASS11 AutoCAD<span className="text-[16px]">版和</span>CASS11<span className="text-[16px]">中望版。</span>
          </p>
        </div>
        <div className="flex flex-1 items-center pl-1">
          <button type="button" aria-label="最近使用的命令" className="flex items-center gap-[2px]">
            <Icon>
              <path d="M0 2h20v16H0z" fill="#d7d9db" stroke="#666" />
              <path d="M0 2h20v4H0z" fill="#555b63" />
              <path d="M3 9l3 2-3 2m5 1h5" stroke="#333" />
            </Icon>
            <Caret className="w-[10px] text-[#666]" />
          </button>
          <input
            aria-label="命令"
            placeholder="键入命令"
            className="ml-[9px] w-full bg-transparent text-[16px] leading-5 italic outline-none placeholder:text-[#8a8a8a]"
          />
        </div>
      </div>
    </section>
  );
}

function SymbolPanel() {
  return (
    <aside className="mt-2 mr-[3px] mb-[13px] flex w-[220px] shrink-0 flex-col">
      <div className="flex h-7 items-center rounded-t-[3px] bg-[#2f3542] pl-2">
        <Grip className="h-3 w-[5px]" />
      </div>
      <div className="flex min-h-0 flex-1 bg-[#454545]">
        <div className="flex flex-1 flex-col border-r border-[#2b2b2b] bg-[#3a3a3a]">
          <div className="flex h-4 items-center border border-[#2b2b2b] bg-[#414141] pl-[14px] text-[#777]">
            <button type="button" aria-label="列表" className="flex w-[18px] justify-center">
              <svg viewBox="0 0 10 8" className="w-[10px]"><path d="M0 0h2v2H0zm3 0h7v2H3zM0 3h2v2H0zm3 0h7v2H3zM0 6h2v2H0zm3 0h7v2H3z" fill="currentColor" /></svg>
            </button>
            <button type="button" aria-label="网格" className="flex h-full w-5 items-center justify-center bg-[#2c2c2c] text-[#999]">
              <svg viewBox="0 0 9 8" className="w-[9px]"><path d="M0 0h4v3.500H0zm5 0h4v3.500H5zM0 4.500h4V8H0zm5 0h4V8H5z" fill="currentColor" /></svg>
            </button>
            <button type="button" aria-label="定位" className="flex w-5 justify-center">
              <svg viewBox="0 0 8 10" className="w-2"><path d="M4 0a4 4 0 014 4c0 2-4 6-4 6S0 6 0 4a4 4 0 014-4zm0 2.500a1.500 1.500 0 100 3 1.500 1.500 0 000-3z" fill="currentColor" /></svg>
            </button>
          </div>
          {categories.map((label) => (
            <button
              key={label}
              type="button"
              className="flex h-7 shrink-0 items-end border-b border-[#323232] bg-[#424242] text-[13px] text-gray-100"
            >
              <span className="flex-1 self-center pb-px pl-4">{label}</span>
              <svg viewBox="0 0 7 7" className="mb-[2px] size-[7px]"><path d="M7 0v7H0z" fill="#8b8b8b" /></svg>
            </button>
          ))}
        </div>
        <div className="flex w-7 shrink-0 flex-col">
          <div className="flex h-4 items-center justify-center border-y border-[#2b2b2b]">
            <Grip className="h-[3px] w-[14px]" />
          </div>
          {sideTabs.map((label) => (
            <button
              key={label}
              type="button"
              className={clsx(
                "flex h-16 shrink-0 flex-col items-center justify-center border-t border-b border-b-[#333] text-[12px] leading-[15px] text-gray-100",
                label === "独立地物" ? "border-t-[#333] bg-[#3d3d3d]" : "border-t-[#777] bg-[#5a5a5a]",
              )}
            >
              {[...label].map((char, i) => (
                <span key={i}>{char}</span>
              ))}
            </button>
          ))}
        </div>
      </div>
    </aside>
  );
}

function StatusButton({ label, width, active, children }: { label: string; width: string; active?: boolean; children: ReactNode }) {
  return (
    <button
      type="button"
      aria-label={label}
      title={label}
      className={clsx("flex h-full shrink-0 items-center justify-center", width, active && "bg-[#5b8cc4]")}
    >
      {children}
    </button>
  );
}

function Person({ badge }: { badge?: ReactNode }) {
  return (
    <Icon>
      <path d="M9 1l3 9 5 9-8-5-8 5 5-9z" fill="#e4e6e8" />
      {badge}
    </Icon>
  );
}

const segment = "flex h-[29px] items-center bg-[#3b4454]";

function StatusBar() {
  return (
    <footer className="flex h-[39px] shrink-0 justify-between pr-1 pl-[13px]">
      <div className="flex h-[30px] items-center text-[15px] text-gray-200">
        <button type="button" className="h-full w-[73px] bg-[#3b4454] pr-[10px] pl-[10px] font-bold text-white [clip-path:polygon(11px_0,100%_0,calc(100%-11px)_100%,0_100%)]">
          模型
        </button>
        <button type="button" className="mr-3 ml-[8px] font-['Open_Sans',sans-serif]">Layout1</button>
        <Slash />
        <button type="button" aria-label="新建布局" className="mx-3"><Plus /></button>
        <Slash />
      </div>
      <div className="mt-[2px] flex gap-[3px] text-[15px] font-medium text-gray-100">
        <div className={segment}>
          <button type="button" className="flex w-[97px] justify-center gap-[7px] whitespace-nowrap">
            <span>比例</span>
            <span>未定义</span>
          </button>
        </div>
        <div className={segment}>
          <button type="button" className="w-[38px] whitespace-nowrap">模型</button>
        </div>
        <div className={segment}>
          <StatusButton label="栅格" width="w-[28px]">
            <Icon><path d="M5 1v18M10 1v18M15 1v18M1 5h18M1 10h18M1 15h18" stroke="#d7dade" /></Icon>
          </StatusButton>
          <StatusButton label="捕捉" width="w-[32px]">
            <Icon className="size-[18px]">
              <path d="M3 3h3M9 3h3M15 3h3M3 8h3M9 8h3M15 8h3M3 13h3M9 13h3M15 13h3M3 18h3M9 18h3M15 18h3" stroke="#d7dade" strokeWidth="2" />
            </Icon>
          </StatusButton>
          <StatusButton label="捕捉选项" width="w-[19px]"><Caret /></StatusButton>
        </div>
        <div className={segment}>
          <StatusButton label="正交" width="w-[30px]">
            <Icon><path d="M2 0v18h18M2 13h5v5" stroke="#c5cad0" strokeWidth="1.300" /></Icon>
          </StatusButton>
          <StatusButton label="极轴" width="w-7" active>
            <Icon>
              <path d="M14 4a7 7 0 102 7M7 11h13M8 11l6-9" stroke="#eef2f6" strokeWidth="1.300" />
              <path d="M13 5c3 2 4 4 3 8" stroke="#eef2f6" strokeWidth="1.300" />
            </Icon>
          </StatusButton>
          <StatusButton label="极轴选项" width="w-6"><Caret /></StatusButton>
          <StatusButton label="等轴测" width="w-[26px]">
            <Icon>
              <path d="M10 0v20M10 10l7 7" stroke="#9ba2ab" strokeWidth="1.200" />
              <path d="M2 3l8 8" stroke="#b7656a" strokeWidth="1.200" />
              <path d="M10 10v8" stroke="#7ca882" />
            </Icon>
          </StatusButton>
          <StatusButton label="等轴测选项" width="w-[22px]"><Caret /></StatusButton>
          <StatusButton label="对象追踪" width="w-7" active>
            <Icon>
              <path d="M1 17h19M1 17L17 2" stroke="#eef2f6" strokeWidth="1.300" />
              <path d="M7 8h5v4H7z" fill="#eef2f6" />
            </Icon>
          </StatusButton>
          <span className="h-full w-[2px] bg-[#222933]" />
          <StatusButton label="对象捕捉" width="w-7" active>
            <Icon>
              <path d="M6 3h13v16H3V7" stroke="#eef2f6" strokeWidth="1.300" />
              <path d="M1 1h5v5H1z" stroke="#eef2f6" strokeWidth="1.300" />
            </Icon>
          </StatusButton>
          <StatusButton label="捕捉设置" width="w-6"><Caret /></StatusButton>
        </div>
        <div className={segment}>
          <StatusButton label="注释可见性" width="w-7" active>
            <Person badge={<circle cx="15.500" cy="4" r="3" stroke="#eef2f6" strokeWidth="1.200" />} />
          </StatusButton>
          <StatusButton label="自动缩放" width="w-[32px]">
            <Person badge={<path d="M16 0l-3 4h2l-1 4 5-5h-3z" fill="#e4e6e8" />} />
          </StatusButton>
          <StatusButton label="注释比例" width="w-[30px]"><Person /></StatusButton>
          <StatusButton label="当前比例" width="w-[42px]">
            <span className="mr-1 font-['Open_Sans',sans-serif] text-[13px]">1:1</span>
            <Caret />
          </StatusButton>
        </div>
        <div className={segment}>
          <StatusButton label="切换工作空间" width="w-[28px]">{icons.gear}</StatusButton>
          <StatusButton label="工作空间选项" width="w-[22px]"><Caret /></StatusButton>
        </div>
        <div className={segment}>
          <StatusButton label="注释监视器" width="w-[28px]">
            <Icon><path d="M10 0v20M0 10h20" stroke="#e1e4e7" strokeWidth="2.200" /></Icon>
          </StatusButton>
        </div>
        <div className={segment}>
          <StatusButton label="隔离对象" width="w-[31px]">
            <Icon>
              <path d="M1 1h6v7H1zM7 12l4 7H3z" stroke="#d6dade" strokeWidth="1.200" />
              <circle cx="15.500" cy="9" r="3.500" stroke="#d6dade" strokeWidth="1.200" />
            </Icon>
          </StatusButton>
          <StatusButton label="硬件加速" width="w-7" active>
            <Icon>
              <circle cx="10" cy="10" r="9" fill="#a4c4e5" stroke="#eef3f8" strokeWidth="1.400" />
              <path d="M8 13l8-9-5 11z" fill="#4a7ab3" stroke="#fff" />
            </Icon>
          </StatusButton>
          <span className="w-[3px]" />
        </div>
        <div className={segment}>
          <StatusButton label="图形性能" width="w-[36px]">
            <Icon>
              <path d="M1 1h18v17H1z" fill="#d7dadd" />
              <path d="M1 13l4-7 5 8 5-9 4 6" stroke="#7a818a" strokeWidth="1.200" />
              <path d="M15 10l5 10H10z" fill="#e89c4f" />
            </Icon>
          </StatusButton>
        </div>
        <div className={segment}>
          <StatusButton label="全屏显示" width="w-[32px]">
            <Icon>
              <path d="M1 2h18v16H1z" stroke="#d7dade" strokeWidth="1.300" />
              <path d="M12 5h4v4M8 15H4v-4M16 5l-3 3M4 15l3-3" stroke="#d7dade" strokeWidth="1.300" />
            </Icon>
          </StatusButton>
          <StatusButton label="自定义" width="w-[32px]">
            <Icon><path d="M0 3h20M0 10h20M0 17h20" stroke="#e1e4e7" strokeWidth="2.200" /></Icon>
          </StatusButton>
        </div>
      </div>
    </footer>
  );
}

export default function App() {
  return (
    <div className="relative flex h-screen flex-col overflow-hidden border border-[#1f83ab] bg-[#222933] font-['Noto_Sans_CJK_SC','Open_Sans',sans-serif]">
      <TitleBar />
      <MenuBar />
      <FileTabs />
      <TopToolbar />
      <main className="flex min-h-0 flex-1 bg-[#3b4454] pl-[3px]">
        <LayerPanel />
        <div className="mx-[5px] flex min-w-0 flex-1 flex-col pt-1">
          <div className="flex min-h-0 flex-1 gap-1 pr-1">
            <VerticalToolbar groups={[leftIcons, drawIcons]} />
            <div className="flex flex-1 justify-between bg-[#212830] pt-1 pr-[9px] pl-1">
              <p className="pt-px font-['Open_Sans','Noto_Sans_CJK_SC',sans-serif] text-[15px] text-gray-200">[−][俯视][二维线框]</p>
              <div className="pt-[10px]">
                <ViewCube />
              </div>
            </div>
            <VerticalToolbar groups={[rightIcons]} />
          </div>
          <CommandLine />
        </div>
        <SymbolPanel />
      </main>
      <StatusBar />
      <div className="pointer-events-none absolute right-[50px] bottom-[50px] flex gap-5 text-[56px] leading-[70px] font-medium whitespace-nowrap text-white [text-shadow:3px_4px_1px_rgba(0,0,0,0.35)]">
        <span>知乎</span>
        <span>@博士</span>
      </div>
    </div>
  );
}
